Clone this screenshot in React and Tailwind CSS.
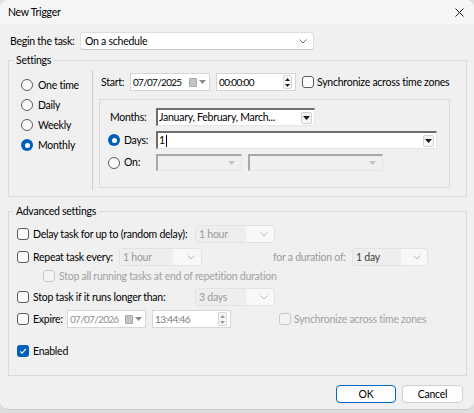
import React from "react";

function Check({ checked, disabled }) {
  if (checked) {
    return (
      <span className="w-[12px] h-[12px] shrink-0 rounded-[3px] bg-[#005fb8] flex items-center justify-center">
        <svg width="8" height="8" viewBox="0 0 8 8">
          <path d="M1.2 4.3 L3.1 6.1 L6.9 1.9" stroke="#fff" strokeWidth="1.1" fill="none" />
        </svg>
      </span>
    );
  }
  return (
    <span
      className={
        disabled
          ? "block w-[12px] h-[12px] shrink-0 rounded-[3px] border border-[#c8c8c8] bg-[#f3f3f3]"
          : "block w-[12px] h-[12px] shrink-0 rounded-[3px] border border-[#5c5c5c] bg-[#fbfbfb]"
      }
    />
  );
}

function Radio({ checked }) {
  if (checked) {
    return (
      <span className="w-[12px] h-[12px] shrink-0 rounded-full bg-[#005fb8] flex items-center justify-center">
        <span className="w-[5px] h-[5px] rounded-full bg-white" />
      </span>
    );
  }
  return <span className="block w-[12px] h-[12px] shrink-0 rounded-full border border-[#5c5c5c] bg-[#fbfbfb]" />;
}

function Chevron({ color }) {
  return (
    <svg width="8" height="5" viewBox="0 0 8 5" className="shrink-0">
      <path d="M0.5 0.5 L4 4 L7.5 0.5" stroke={color} strokeWidth="1" fill="none" />
    </svg>
  );
}

function Tri({ color }) {
  return (
    <svg width="7" height="4" viewBox="0 0 7 4" className="shrink-0">
      <path d="M0 0 H7 L3.5 4 Z" fill={color} />
    </svg>
  );
}

// modern combobox, enabled or greyed out
function Combo({ value, width, disabled, dark }) {
  if (!disabled) {
    return (
      <div className={`${width} h-[18px] shrink-0 bg-white border border-[#dedede] border-b-[#c6c6c6] rounded-[3px] flex items-center justify-between pl-[4px] pr-[6px]`}>
        <span>{value}</span>
        <Chevron color="#6a6a6a" />
      </div>
    );
  }
  return (
    <div className={`${width} h-[18px] shrink-0 bg-[#f8f8f8] border border-[#e2e2e2] rounded-[3px] flex items-center justify-between pr-[6px]`}>
      <span className={dark ? "h-full w-[70%] bg-[#eeeeee] flex items-center pl-[3px] text-[#3c3c3c]" : "h-full w-[70%] bg-[#eeeeee] flex items-center pl-[3px] text-[#9a9a9a]"}>
        {value}
      </span>
      <Chevron color="#b9b9b9" />
    </div>
  );
}

// old-style sunken combobox used in the monthly panel
function SunkenCombo({ width, value, caret, disabled }) {
  return (
    <div
      className={
        disabled
          ? `${width} h-[17px] shrink-0 bg-[#f0f0f0] border-t-2 border-l-2 border-t-[#a8a8a8] border-l-[#a8a8a8] border-r border-b border-r-[#e6e6e6] border-b-[#e6e6e6] flex items-center justify-end pr-[6px]`
          : `${width} h-[18px] shrink-0 bg-white border-t-2 border-l-2 border-t-[#6e6e6e] border-l-[#6e6e6e] border-r border-b border-r-[#e6e6e6] border-b-[#e6e6e6] flex items-center justify-between pl-[1px] pr-[2px]`
      }
    >
      {!disabled && (
        <span className="flex items-center">
          {value}
          {caret && <span className="w-px h-[12px] bg-black ml-[1px]" />}
        </span>
      )}
      {disabled ? (
        <Tri color="#c2c2c2" />
      ) : (
        <span className="w-[11px] h-[12px] shrink-0 rounded-[2px] border border-[#d2d2d2] bg-[#f7f7f7] flex items-center justify-center">
          <Tri color="#1a1a1a" />
        </span>
      )}
    </div>
  );
}

function DateBox({ value, muted }) {
  return (
    <div className="w-full h-full bg-white border border-[#d6d6d6] flex items-center justify-between pl-[2px] pr-[3px]">
      <span className={muted ? "text-[10px] tracking-[-0.7px] text-[#8c8c8c]" : "text-[10px] tracking-[-0.7px] text-black"}>{value}</span>
      <span className="flex items-center gap-[2px] shrink-0">
        <span className="w-[8px] h-[9px] rounded-[1px] bg-[#c4c4c4] border border-[#a9a9a9]" />
        <Tri color="#8a8a8a" />
      </span>
    </div>
  );
}

function TimeBox({ value, muted }) {
  return (
    <div className="w-full h-full bg-white border border-[#d6d6d6] flex items-center justify-between pl-[2px] pr-[3px]">
      <span className={muted ? "text-[10px] tracking-[-0.6px] text-[#7c7c7c]" : "text-[10px] tracking-[-0.6px] text-black"}>{value}</span>
      <span className="w-[9px] h-[14px] shrink-0 border border-[#d6d6d6] bg-[#f6f6f6] rounded-[2px] flex flex-col items-center justify-around">
        <svg width="5" height="3" viewBox="0 0 5 3"><path d="M0 3 L2.5 0 L5 3 Z" fill={muted ? "#9a9a9a" : "#222"} /></svg>
        <svg width="5" height="3" viewBox="0 0 5 3"><path d="M0 0 H5 L2.5 3 Z" fill={muted ? "#9a9a9a" : "#222"} /></svg>
      </span>
    </div>
  );
}

export default function App() {
  return (
    <div className="w-[474px] h-[413px] bg-[#dedede] font-['Lato',sans-serif] text-[10.5px] tracking-[-0.25px] leading-none text-black whitespace-nowrap">
      <div className="h-[410px] bg-[#f0f0f0] rounded-[8px] overflow-hidden flex flex-col border-b border-[#c9c9c9]">
        {/* title bar */}
        <div className="h-[24px] shrink-0 bg-[#f5f5f6] flex items-center justify-between pl-[8px] pr-[10px]">
          <span>New Trigger</span>
          <svg width="9" height="9" viewBox="0 0 9 9">
            <path d="M0.5 0.5 L8.5 8.5 M8.5 0.5 L0.5 8.5" stroke="#222" strokeWidth="1" />
          </svg>
        </div>

        <div className="mt-[8px] h-[18px] flex items-center">
          <span className="ml-[10px] w-[70px] shrink-0">Begin the task:</span>
          <Combo value="On a schedule" width="w-[234px]" />
        </div>

        {/* Settings */}
        <fieldset className="mt-[3px] ml-[8px] mr-[7px] border border-[#dadada] pb-[6px]">
          <legend className="ml-[4px] px-[3px] leading-[14px]">Settings</legend>
          <div className="flex">
            <div className="w-[83px] shrink-0 pt-[8px] flex flex-col">
              {["One time", "Daily", "Weekly", "Monthly"].map((label) => (
                <div key={label} className="h-[20px] flex items-center pl-[12px] gap-[5px]">
                  <Radio checked={label === "Monthly"} />
                  <span>{label}</span>
                </div>
              ))}
            </div>
            <div className="w-px shrink-0 h-[120px] mt-[3px] bg-[#cdcdcd]" />
            <div className="flex-1 flex flex-col">
              <div className="mt-[6px] h-[18px] flex items-center pl-[8px]">
                <span className="w-[29px] shrink-0">Start:</span>
                <div className="w-[80px] h-[18px] shrink-0">
                  <DateBox value="07/07/2025" />
                </div>
                <div className="ml-[6px] w-[80px] h-[18px] shrink-0">
                  <TimeBox value="00:00:00" />
                </div>
                <span className="ml-[6px] shrink-0"><Check /></span>
                <span className="ml-[3px]">Synchronize across time zones</span>
              </div>

              <div className="mt-[8px] ml-[6px] w-[351px] h-[89px] border border-[#dadada] flex flex-col">
                <div className="mt-[8px] h-[18px] flex items-center pl-[10px]">
                  <span className="w-[46px] shrink-0">Months:</span>
                  <SunkenCombo width="w-[159px]" value="January, February, March..." />
                </div>
                <div className="mt-[5px] h-[18px] flex items-center pl-[8px]">
                  <span className="w-[48px] shrink-0 flex items-center gap-[4px]">
                    <Radio checked />
                    Days:
                  </span>
                  <SunkenCombo width="w-[281px]" value="1" caret />
                </div>
                <div className="mt-[5px] h-[17px] flex items-center pl-[8px]">
                  <span className="w-[48px] shrink-0 flex items-center gap-[4px]">
                    <Radio />
                    On:
                  </span>
                  <SunkenCombo width="w-[86px]" disabled />
                  <span className="ml-[6px] shrink-0">
                    <SunkenCombo width="w-[135px]" disabled />
                  </span>
                </div>
              </div>
            </div>
          </div>
        </fieldset>

        {/* Advanced settings */}
        <fieldset className="mt-[7px] ml-[8px] mr-[7px] border border-[#dadada] pb-[15px]">
          <legend className="ml-[4px] px-[3px] leading-[14px]">Advanced settings</legend>

          <div className="mt-[7px] h-[18px] flex items-center pl-[8px]">
            <Check />
            <span className="ml-[4px] w-[162px] shrink-0">Delay task for up to (random delay):</span>
            <Combo value="1 hour" width="w-[80px]" disabled />
          </div>

          <div className="mt-[5px] h-[18px] flex items-center pl-[8px]">
            <Check />
            <span className="ml-[4px] w-[86px] shrink-0">Repeat task every:</span>
            <Combo value="1 hour" width="w-[83px]" disabled />
            <span className="ml-[71px] w-[79px] shrink-0 text-[#9a9a9a]">for a duration of:</span>
            <Combo value="1 day" width="w-[76px]" disabled dark />
          </div>

          <div className="mt-[1px] h-[18px] flex items-center pl-[34px]">
            <Check disabled />
            <span className="ml-[4px] text-[#a2a2a2]">Stop all running tasks at end of repetition duration</span>
          </div>

          <div className="mt-[3px] h-[18px] flex items-center pl-[8px]">
            <Check />
            <span className="ml-[4px] w-[162px] shrink-0">Stop task if it runs longer than:</span>
            <Combo value="3 days" width="w-[80px]" disabled />
          </div>

          <div className="mt-[4px] h-[18px] flex items-center pl-[8px]">
            <Check />
            <span className="ml-[4px] w-[34px] shrink-0">Expire:</span>
            <div className="w-[79px] h-[18px] shrink-0">
              <DateBox value="07/07/2026" muted />
            </div>
            <div className="ml-[6px] w-[79px] h-[18px] shrink-0">
              <TimeBox value="13:44:46" muted />
            </div>
            <span className="ml-[48px] shrink-0"><Check disabled /></span>
            <span className="ml-[3px] text-[#a2a2a2]">Synchronize across time zones</span>
          </div>

          <div className="mt-[14px] h-[18px] flex items-center pl-[8px]">
            <Check checked />
            <span className="ml-[4px]">Enabled</span>
          </div>
        </fieldset>

        <div className="mt-[9px] flex justify-end gap-[6px] pr-[11px]">
          <button className="w-[60px] h-[18px] bg-[#fdfdfd] border border-[#0067c0] rounded-[4px]">OK</button>
          <button className="w-[61px] h-[18px] bg-[#fdfdfd] border border-[#d0d0d0] rounded-[4px]">Cancel</button>
        </div>
      </div>
    </div>
  );
}
